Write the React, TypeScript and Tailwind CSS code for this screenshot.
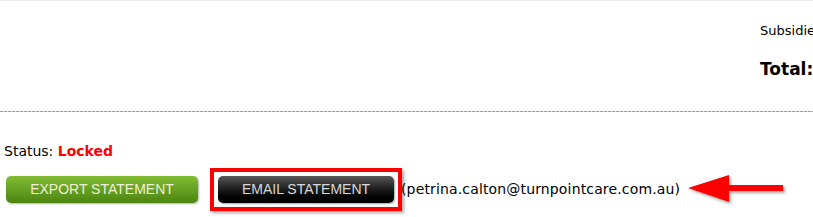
import React from "react";

const ArrowLeft: React.FC = () => (
	<svg width="100" height="34" viewBox="0 0 100 34" className="overflow-visible">
		<defs>
			<filter id="sh" x="-20%" y="-30%" width="140%" height="160%">
				<feDropShadow dx="2" dy="2" stdDeviation="1.5" floodColor="#000" floodOpacity="0.35" />
			</filter>
		</defs>
		<polygon
			points="2,14 43,1 43,11 97,11 97,17 43,17 43,28"
			fill="#ff0000"
			filter="url(#sh)"
		/>
	</svg>
);

const App: React.FC = () => {
	return (
		<div className="w-[813px] h-[217px] overflow-hidden bg-white border-t border-[#ececec] font-['DejaVu_Sans',sans-serif] text-black">
			<div className="h-[110px] pl-[760px] pt-[21px] whitespace-nowrap">
				<p className="text-[13px] leading-[18px]">Subsidies:</p>
				<p className="mt-[18px] text-[17px] font-bold leading-[22px]">Total:</p>
			</div>
			<div className="h-px bg-[repeating-linear-gradient(to_right,#9a9a9a_0_3px,#e2e2e2_3px_4px)]"></div>

			<p className="mt-[31px] pl-[4px] text-[14px] leading-[17px]">
				Status: <span className="font-bold text-[#ff0000]">Locked</span>
			</p>

			<div className="mt-[8px] flex items-center">
				<button className="ml-[6px] w-[192px] h-[27px] rounded-[5px] bg-gradient-to-b from-[#82bd34] to-[#4c8510] shadow-[1px_1px_2px_rgba(0,0,0,0.3)] text-[14px] text-[#eef0d8] font-['Liberation_Sans',sans-serif]">
					EXPORT STATEMENT
				</button>
				<div className="ml-[12px] border-[4px] border-[#ff0000] px-[4px] py-[4px] shadow-[2px_2px_3px_rgba(0,0,0,0.35)]">
					<button className="block w-[176px] h-[27px] rounded-[5px] bg-gradient-to-b from-[#5a5a5a] via-[#1c1c1c] to-[#000000] shadow-[1px_1px_2px_rgba(0,0,0,0.35)] text-[14px] text-[#d8d8d8] font-['Liberation_Sans',sans-serif]">
						EMAIL STATEMENT
					</button>
				</div>
				<span className="ml-[-1px] text-[14px] tracking-[0.15px] whitespace-nowrap">
					(petrina.calton@turnpointcare.com.au)
				</span>
				<span className="ml-[6px] mt-[2px]">
					<ArrowLeft />
				</span>
			</div>
		</div>
	);
};

export default App;
